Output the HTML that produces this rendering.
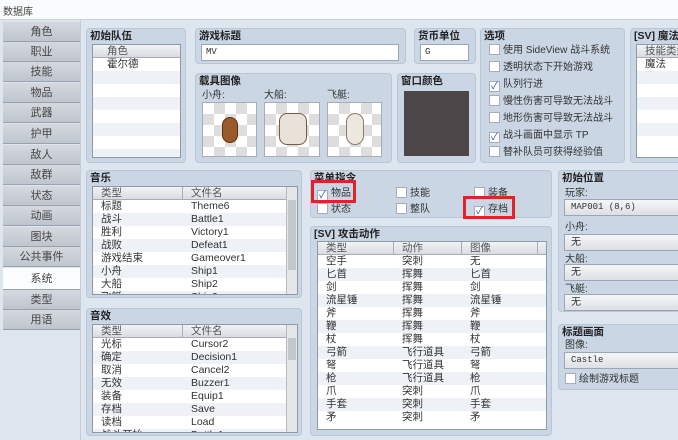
<!DOCTYPE html>
<html><head><meta charset="utf-8"><style>
*{box-sizing:border-box;margin:0;padding:0}
body{width:678px;height:440px;overflow:hidden;background:#dde5ee;font-family:"Liberation Sans","Noto Sans CJK SC",sans-serif;font-size:11px;color:#333;position:relative}
.a{position:absolute}
.top{left:0;top:0;width:678px;height:20px;background:#fafbfc;border-bottom:1px solid #c8d0da}
.tab{position:absolute;left:3px;width:77px;height:20px;background:linear-gradient(#d5d9df,#bfc5cd);border-bottom:1px solid #9aa2ad;text-align:center;line-height:20px;color:#444}
.tab.sel{background:#fbfcfd}
.p{position:absolute;background:#cad6e4;border-radius:4px;border:1px solid #b8c6d6}
.p b{position:absolute;left:3px;top:1px;font-size:10.5px;line-height:12px;color:#222}
.in{position:absolute;background:#fff;border:1px solid #9aa6b4;font-family:"Liberation Mono",monospace;font-size:9px;padding-left:4px;line-height:15px}
.list{position:absolute;background:#fff;border:1px solid #8e9aa8;overflow:hidden;font-size:10.5px}
.hd{height:13px;background:linear-gradient(#f2f3f5,#d8dce1);border-bottom:1px solid #aab;display:flex;color:#555}
.r{height:13px;line-height:13px;display:flex}
.r:nth-child(odd){background:#eef1f5}
.c{padding-left:8px;white-space:nowrap;overflow:hidden}
.hd .c{border-right:1px solid #aab;line-height:13px}
.cb{display:inline-block;width:11px;height:11px;background:#fff;border:1px solid #aab;vertical-align:-2px;margin-right:3px;font-size:10px;line-height:9px;text-align:center;color:#2255aa}
.opt{position:absolute;left:8px;height:17px;line-height:14px;white-space:nowrap;font-size:10px}
.chk{background-image:linear-gradient(45deg,#ddd 25%,transparent 25%,transparent 75%,#ddd 75%),linear-gradient(45deg,#ddd 25%,#fff 25%,#fff 75%,#ddd 75%);background-size:22px 22px;background-position:0 0,11px 11px;border:1px solid #aab}
.sb{position:absolute;right:0;top:0;bottom:0;width:11px;background:#e4e6e9;border-left:1px solid #bbb}
.sel2{position:absolute;height:17px;background:linear-gradient(#f6f7f8,#dcdfe3);border:1px solid #9aa6b4;padding-left:6px;line-height:15px;font-size:10px}
.lb{position:absolute;left:6px;font-size:10px;line-height:11px}
.red{position:absolute;border:3px solid #e0222a}
</style></head><body>
<div class="a top"><span style="position:absolute;left:3px;top:3px;font-size:10px;color:#444">数据库</span></div>

<div class="tab" style="top:22px">角色</div>
<div class="tab" style="top:42px">职业</div>
<div class="tab" style="top:62px">技能</div>
<div class="tab" style="top:83px">物品</div>
<div class="tab" style="top:103px">武器</div>
<div class="tab" style="top:124px">护甲</div>
<div class="tab" style="top:145px">敌人</div>
<div class="tab" style="top:165px">敌群</div>
<div class="tab" style="top:186px">状态</div>
<div class="tab" style="top:206px">动画</div>
<div class="tab" style="top:227px">图块</div>
<div class="tab" style="top:247px">公共事件</div>
<div class="tab sel" style="top:268px;height:22px;line-height:22px">系统</div>
<div class="tab" style="top:290px">类型</div>
<div class="tab" style="top:310px">用语</div>
<div class="a" style="left:80px;top:20px;width:1px;height:420px;background:#c4ccd6"></div>

<div class="p" style="left:86px;top:28px;width:100px;height:135px"><b>初始队伍</b>
<div class="list" style="left:5px;top:15px;width:89px;height:114px">
<div class="hd"><div class="c" style="padding-left:14px;border:none">角色</div></div>
<div class="r" style="background:#fff"><div class="c" style="padding-left:14px">霍尔德</div></div>
<div style="height:13px;background:#eef1f5"></div><div style="height:13px"></div><div style="height:13px;background:#eef1f5"></div><div style="height:13px"></div><div style="height:13px;background:#eef1f5"></div><div style="height:13px"></div><div style="height:13px;background:#eef1f5"></div>
</div></div>

<div class="p" style="left:195px;top:28px;width:211px;height:36px"><b>游戏标题</b><div class="in" style="left:5px;top:15px;width:198px;height:17px">MV</div></div>
<div class="p" style="left:414px;top:28px;width:62px;height:36px"><b>货币单位</b><div class="in" style="left:5px;top:15px;width:49px;height:17px">G</div></div>

<div class="p" style="left:480px;top:28px;width:145px;height:135px"><b>选项</b>
<div class="opt" style="top:15px"><span class="cb"></span>使用 SideView 战斗系统</div>
<div class="opt" style="top:32px"><span class="cb"></span>透明状态下开始游戏</div>
<div class="opt" style="top:49px"><span class="cb">✓</span>队列行进</div>
<div class="opt" style="top:66px"><span class="cb"></span>慢性伤害可导致无法战斗</div>
<div class="opt" style="top:83px"><span class="cb"></span>地形伤害可导致无法战斗</div>
<div class="opt" style="top:100px"><span class="cb">✓</span>战斗画面中显示 TP</div>
<div class="opt" style="top:117px"><span class="cb"></span>替补队员可获得经验值</div>
</div>

<div class="p" style="left:630px;top:28px;width:52px;height:135px"><b style="white-space:nowrap">[SV] 魔法技</b>
<div class="list" style="left:5px;top:15px;width:50px;height:114px">
<div class="hd"><div class="c" style="border:none">技能类型</div></div>
<div class="r" style="background:#fff"><div class="c">魔法</div></div>
<div style="height:13px;background:#eef1f5"></div><div style="height:13px"></div><div style="height:13px;background:#eef1f5"></div><div style="height:13px"></div><div style="height:13px;background:#eef1f5"></div><div style="height:13px"></div></div></div>

<div class="p" style="left:195px;top:73px;width:197px;height:90px"><b>载具图像</b>
<span class="lb" style="left:6px;top:16px">小舟:</span>
<span class="lb" style="left:68px;top:16px">大船:</span>
<span class="lb" style="left:131px;top:16px">飞艇:</span>
<div class="a chk" style="left:6px;top:28px;width:55px;height:55px"><div class="a" style="left:19px;top:14px;width:16px;height:26px;border-radius:8px;background:#9a5a2a;border:1px solid #5a3010"></div></div>
<div class="a chk" style="left:68px;top:28px;width:56px;height:55px"><div class="a" style="left:14px;top:10px;width:28px;height:32px;border-radius:8px;background:#e8e2d8;border:1px solid #7a5a40"></div></div>
<div class="a chk" style="left:131px;top:28px;width:55px;height:55px"><div class="a" style="left:18px;top:10px;width:18px;height:32px;border-radius:9px;background:#ece8e0;border:1px solid #8a7a6a"></div></div>
</div>

<div class="p" style="left:397px;top:73px;width:79px;height:90px"><b>窗口颜色</b><div class="a" style="left:6px;top:17px;width:65px;height:65px;background:#4d4649"></div></div>

<div class="p" style="left:86px;top:170px;width:216px;height:128px"><b>音乐</b>
<div class="list" style="left:5px;top:15px;width:206px;height:109px">
<div class="hd"><div class="c" style="width:90px">类型</div><div class="c" style="width:104px">文件名</div></div>
<div class="r"><div class="c" style="width:90px">标题</div><div class="c">Theme6</div></div>
<div class="r"><div class="c" style="width:90px">战斗</div><div class="c">Battle1</div></div>
<div class="r"><div class="c" style="width:90px">胜利</div><div class="c">Victory1</div></div>
<div class="r"><div class="c" style="width:90px">战败</div><div class="c">Defeat1</div></div>
<div class="r"><div class="c" style="width:90px">游戏结束</div><div class="c">Gameover1</div></div>
<div class="r"><div class="c" style="width:90px">小舟</div><div class="c">Ship1</div></div>
<div class="r"><div class="c" style="width:90px">大船</div><div class="c">Ship2</div></div>
<div class="r"><div class="c" style="width:90px">飞艇</div><div class="c">Ship3</div></div>
<div class="sb"><div style="position:absolute;left:1px;top:13px;width:8px;height:70px;background:#c4c7cb"></div></div>
</div></div>

<div class="p" style="left:86px;top:308px;width:216px;height:128px"><b>音效</b>
<div class="list" style="left:5px;top:15px;width:206px;height:109px">
<div class="hd"><div class="c" style="width:90px">类型</div><div class="c" style="width:104px">文件名</div></div>
<div class="r"><div class="c" style="width:90px">光标</div><div class="c">Cursor2</div></div>
<div class="r"><div class="c" style="width:90px">确定</div><div class="c">Decision1</div></div>
<div class="r"><div class="c" style="width:90px">取消</div><div class="c">Cancel2</div></div>
<div class="r"><div class="c" style="width:90px">无效</div><div class="c">Buzzer1</div></div>
<div class="r"><div class="c" style="width:90px">装备</div><div class="c">Equip1</div></div>
<div class="r"><div class="c" style="width:90px">存档</div><div class="c">Save</div></div>
<div class="r"><div class="c" style="width:90px">读档</div><div class="c">Load</div></div>
<div class="r"><div class="c" style="width:90px">战斗开始</div><div class="c">Battle1</div></div>
<div class="sb"><div style="position:absolute;left:1px;top:13px;width:8px;height:22px;background:#c4c7cb"></div></div>
</div></div>

<div class="p" style="left:310px;top:170px;width:242px;height:48px"><b>菜单指令</b>
<div class="opt" style="top:16px;left:6px"><span class="cb">✓</span>物品</div>
<div class="opt" style="top:32px;left:6px"><span class="cb"></span>状态</div>
<div class="opt" style="top:16px;left:85px"><span class="cb"></span>技能</div>
<div class="opt" style="top:32px;left:85px"><span class="cb"></span>整队</div>
<div class="opt" style="top:16px;left:163px"><span class="cb"></span>装备</div>
<div class="opt" style="top:32px;left:163px"><span class="cb">✓</span>存档</div>
</div>
<div class="red" style="left:311px;top:180px;width:45px;height:23px"></div>
<div class="red" style="left:463px;top:196px;width:52px;height:23px"></div>

<div class="p" style="left:310px;top:226px;width:242px;height:210px"><b>[SV] 攻击动作</b>
<div class="list" style="left:6px;top:14px;width:230px;height:189px">
<div class="hd"><div class="c" style="width:76px">类型</div><div class="c" style="width:68px">动作</div><div class="c" style="width:76px">图像</div></div>
<div class="r"><div class="c" style="width:76px">空手</div><div class="c" style="width:68px">突刺</div><div class="c">无</div></div>
<div class="r"><div class="c" style="width:76px">匕首</div><div class="c" style="width:68px">挥舞</div><div class="c">匕首</div></div>
<div class="r"><div class="c" style="width:76px">剑</div><div class="c" style="width:68px">挥舞</div><div class="c">剑</div></div>
<div class="r"><div class="c" style="width:76px">流星锤</div><div class="c" style="width:68px">挥舞</div><div class="c">流星锤</div></div>
<div class="r"><div class="c" style="width:76px">斧</div><div class="c" style="width:68px">挥舞</div><div class="c">斧</div></div>
<div class="r"><div class="c" style="width:76px">鞭</div><div class="c" style="width:68px">挥舞</div><div class="c">鞭</div></div>
<div class="r"><div class="c" style="width:76px">杖</div><div class="c" style="width:68px">挥舞</div><div class="c">杖</div></div>
<div class="r"><div class="c" style="width:76px">弓箭</div><div class="c" style="width:68px">飞行道具</div><div class="c">弓箭</div></div>
<div class="r"><div class="c" style="width:76px">弩</div><div class="c" style="width:68px">飞行道具</div><div class="c">弩</div></div>
<div class="r"><div class="c" style="width:76px">枪</div><div class="c" style="width:68px">飞行道具</div><div class="c">枪</div></div>
<div class="r"><div class="c" style="width:76px">爪</div><div class="c" style="width:68px">突刺</div><div class="c">爪</div></div>
<div class="r"><div class="c" style="width:76px">手套</div><div class="c" style="width:68px">突刺</div><div class="c">手套</div></div>
<div class="r"><div class="c" style="width:76px">矛</div><div class="c" style="width:68px">突刺</div><div class="c">矛</div></div>
</div></div>

<div class="p" style="left:558px;top:170px;width:124px;height:142px"><b>初始位置</b>
<span class="lb" style="top:17px">玩家:</span>
<div class="sel2" style="left:5px;top:28px;width:120px;font-family:'Liberation Mono',monospace;font-size:9px">MAP001 (8,6)</div>
<span class="lb" style="top:51px">小舟:</span>
<div class="sel2" style="left:5px;top:63px;width:120px">无</div>
<span class="lb" style="top:83px">大船:</span>
<div class="sel2" style="left:5px;top:93px;width:120px">无</div>
<span class="lb" style="top:113px">飞艇:</span>
<div class="sel2" style="left:5px;top:123px;width:120px">无</div>
</div>

<div class="p" style="left:558px;top:324px;width:124px;height:66px"><b>标题画面</b>
<span class="lb" style="top:15px">图像:</span>
<div class="sel2" style="left:5px;top:27px;width:120px;font-family:'Liberation Mono',monospace;font-size:9px">Castle</div>
<div class="opt" style="top:48px;left:6px"><span class="cb"></span>绘制游戏标题</div>
</div>
</body></html>
